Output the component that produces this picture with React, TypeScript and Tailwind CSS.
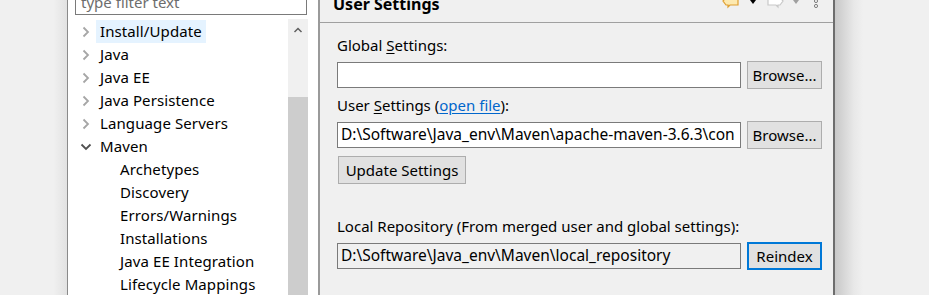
import React from 'react';

const font = { fontFamily: '"Noto Sans", "Liberation Sans", sans-serif' };

const treeItems: { label: string; depth: 0 | 1; open?: boolean; selected?: boolean }[] = [
  { label: 'Install/Update', depth: 0, selected: true },
  { label: 'Java', depth: 0 },
  { label: 'Java EE', depth: 0 },
  { label: 'Java Persistence', depth: 0 },
  { label: 'Language Servers', depth: 0 },
  { label: 'Maven', depth: 0, open: true },
  { label: 'Archetypes', depth: 1 },
  { label: 'Discovery', depth: 1 },
  { label: 'Errors/Warnings', depth: 1 },
  { label: 'Installations', depth: 1 },
  { label: 'Java EE Integration', depth: 1 },
  { label: 'Lifecycle Mappings', depth: 1 },
];

const Chevron = ({ open }: { open?: boolean }) => (
  <svg width="12" height="12" viewBox="0 0 12 12" className="shrink-0">
    {open ? (
      <path d="M1.5 3.5 L6 8 L10.5 3.5" fill="none" stroke="#505050" strokeWidth="1.8" />
    ) : (
      <path d="M3.5 1.5 L8 6 L3.5 10.5" fill="none" stroke="#a6a6a6" strokeWidth="1.8" />
    )}
  </svg>
);

const TextBox = ({ value, readOnly }: { value?: string; readOnly?: boolean }) => (
  <div
    className={`h-[26px] w-[404px] border border-[#7a7a7a] px-[3px] flex items-center overflow-hidden whitespace-nowrap text-[15.5px] text-black ${
      readOnly ? 'bg-[#f0f0f0]' : 'bg-white'
    }`}
  >
    {value}
  </div>
);

const Button = ({ children, focused, className = '' }: { children: React.ReactNode; focused?: boolean; className?: string }) => (
  <div
    className={`h-[28px] flex items-center justify-center bg-[#e1e1e1] text-[15px] text-black ${
      focused ? 'border-2 border-[#0078d7]' : 'border border-[#adadad]'
    } ${className}`}
  >
    {children}
  </div>
);

export default function App() {
  return (
    <div className="w-[929px] h-[295px] overflow-hidden bg-[#f0f0f0] flex text-black" style={font}>
      {/* outside area with dialog shadow */}
      <div className="w-[67px] h-full bg-gradient-to-r from-[#f0f0f0] from-80% to-[#e2e2e2]" />
      <div className="w-px h-full bg-[#8a8a8a]" />

      {/* tree panel */}
      <div className="w-[250px] h-full bg-white flex flex-col">
        <div className="pl-[7px] h-[19px]">
          <div className="w-[232px] h-[26px] -mt-[11px] border border-[#7a7a7a] bg-white px-[5px] text-[15px] text-[#6d6d6d] leading-[24px]">
            type filter text
          </div>
        </div>
        <div className="flex flex-1 min-h-0">
          <div className="flex-1 pt-px">
            {treeItems.map((it) => (
              <div key={it.label} className="h-[23px] flex items-center">
                <div className="w-[32px] flex justify-end pr-[8px] shrink-0">
                  {it.depth === 0 && <Chevron open={it.open} />}
                </div>
                <div
                  className={`h-[23px] flex items-center px-[4px] -ml-[4px] text-[15px] tracking-[0.1px] whitespace-nowrap ${
                    it.depth === 1 ? 'ml-[16px]' : ''
                  } ${it.selected ? 'bg-[#e5f3ff]' : ''}`}
                >
                  {it.label}
                </div>
              </div>
            ))}
          </div>
          {/* scrollbar */}
          <div className="w-[20px] mr-[10px] flex flex-col bg-[#f0f0f0] pt-[1px]">
            <div className="h-[20px] flex items-center justify-center">
              <svg width="10" height="8" viewBox="0 0 10 8">
                <path d="M1.5 6 L5 2.5 L8.5 6" fill="none" stroke="#606060" strokeWidth="1.5" />
              </svg>
            </div>
            <div className="h-[57px]" />
            <div className="flex-1 bg-[#cdcdcd]" />
          </div>
        </div>
      </div>
      <div className="w-[2px] h-full bg-[#9a9a9a]" />

      {/* settings page */}
      <div className="w-[513px] h-full flex flex-col">
        <div className="h-[23px] border-b border-[#a0a0a0] flex items-start pl-[13px] pr-[13px]">
          <div className="-mt-[8px] text-[16px] font-bold leading-[24px]">User Settings</div>
          <div className="ml-auto flex items-start -mt-[3px]">
            <svg width="20" height="12" viewBox="0 0 20 12">
              <path d="M2 4 L7 -2 L7 1 L17 1 L17 8 L9 8 L7 10 L7 8 L5 8 Z" fill="#fde9b0" stroke="#e0a030" strokeWidth="1.2" />
            </svg>
            <svg width="10" height="10" viewBox="0 0 10 10" className="ml-[7px]">
              <path d="M2 3 L8 3 L5 7 Z" fill="#000" />
            </svg>
            <svg width="20" height="12" viewBox="0 0 20 12" className="ml-[7px]">
              <path d="M18 4 L13 -2 L13 1 L3 1 L3 8 L11 8 L13 10 L13 8 L15 8 Z" fill="#fff" stroke="#c8c8c8" strokeWidth="1.2" />
            </svg>
            <svg width="10" height="10" viewBox="0 0 10 10" className="ml-[6px]">
              <path d="M2 3 L8 3 L5 7 Z" fill="#a0a0a0" />
            </svg>
            <svg width="8" height="13" viewBox="0 0 8 13" className="ml-[11px]">
              <circle cx="4" cy="4" r="1.6" fill="none" stroke="#808080" strokeWidth="1" />
              <circle cx="4" cy="9" r="1.6" fill="none" stroke="#808080" strokeWidth="1" />
            </svg>
          </div>
        </div>

        <div className="pl-[17px] flex flex-col">
          <div className="mt-[11px] h-[22px] leading-[22px] text-[15px]">
            Global <span className="underline underline-offset-2">S</span>ettings:
          </div>
          <div className="mt-[5px] flex items-center gap-[6px]">
            <TextBox />
            <Button className="w-[75px]">Browse...</Button>
          </div>
          <div className="mt-[5px] h-[22px] leading-[22px] text-[15px]">
            User <span className="underline underline-offset-2">S</span>ettings (
            <span className="text-[#0066cc] underline underline-offset-2">open file</span>):
          </div>
          <div className="mt-[5px] flex items-center gap-[6px]">
            <TextBox value="D:\Software\Java_env\Maven\apache-maven-3.6.3\con" />
            <Button className="w-[75px]">Browse...</Button>
          </div>
          <div className="mt-[7px] ml-px">
            <Button className="w-[128px]">Update Settings</Button>
          </div>
          <div className="mt-[31px] h-[22px] leading-[22px] text-[15px]">
            Local Repository (From merged user and global settings):
          </div>
          <div className="mt-[5px] flex items-center gap-[6px]">
            <TextBox value="D:\Software\Java_env\Maven\local_repository" readOnly />
            <Button focused className="w-[75px]">Reindex</Button>
          </div>
        </div>
      </div>
      <div className="w-[2px] h-full bg-[#6d6d6d]" />

      {/* outside area with shadow */}
      <div className="flex-1 h-full bg-gradient-to-r from-[#c8c8c8] via-[#e8e8e8] via-20% to-[#f0f0f0] to-30%" />
    </div>
  );
}
